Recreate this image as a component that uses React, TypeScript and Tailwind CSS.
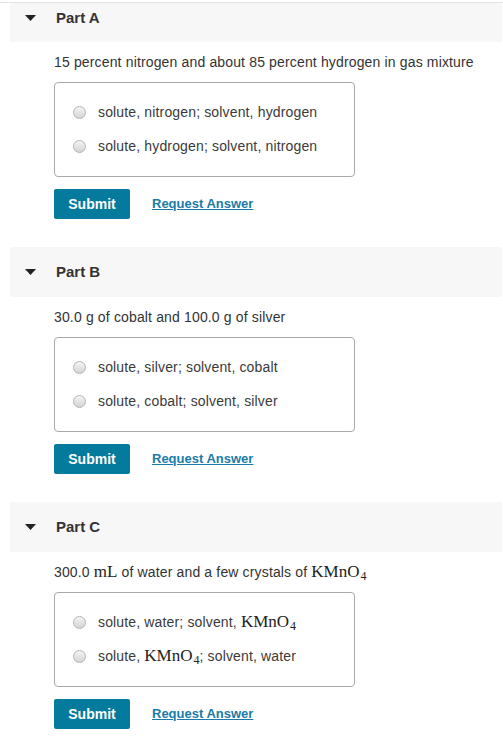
import React from "react";

const serif = { fontFamily: '"Liberation Serif", "DejaVu Serif", serif' } as const;

function KMnO4() {
  return (
    <span className="text-[17px] leading-none text-[#222] tracking-normal" style={serif}>
      KMnO<sub className="text-[12px] ml-[1px]">4</sub>
    </span>
  );
}

function Radio() {
  return (
    <span className="inline-block w-[13px] h-[13px] rounded-full border border-[#b4b4b4] bg-gradient-to-b from-[#f4f4f4] to-[#d4d4d4] shrink-0" />
  );
}

function Triangle() {
  return (
    <svg width="11" height="6" viewBox="0 0 11 6" className="shrink-0">
      <polygon points="0,0 11,0 5.5,6" fill="#222" />
    </svg>
  );
}

function Section({
  title,
  question,
  options,
  first,
}: {
  title: string;
  question: React.ReactNode;
  options: React.ReactNode[];
  first?: boolean;
}) {
  return (
    <div className={first ? "" : "mt-[28px]"}>
      <div
        className={
          "bg-[#f7f7f7] flex items-center pl-[15px] " +
          (first ? "h-[39px] pb-[9px]" : "h-[50px]")
        }
      >
        <Triangle />
        <span className="ml-[20px] text-[15px] font-bold text-[#333]">{title}</span>
      </div>
      <div className="pl-[44px]">
        <div className="mt-[10px] h-[20px] flex items-center text-[14px] tracking-[0.15px] text-[#333] whitespace-nowrap">
          {question}
        </div>
        <div className="mt-[10px] w-[301px] h-[95px] border border-[#a9a9a9] rounded-[4px] pt-[12px]">
          {options.map((o, i) => (
            <div key={i} className="h-[34px] flex items-center pl-[18px]">
              <Radio />
              <span className="ml-[12px] text-[14px] tracking-[0.15px] text-[#3a3a3a] whitespace-nowrap">{o}</span>
            </div>
          ))}
        </div>
        <div className="mt-[12px] flex items-center">
          <button className="h-[30px] w-[76px] bg-[#047b9c] rounded-[2px] text-white text-[14px] font-bold">
            Submit
          </button>
          <span className="ml-[22px] text-[13px] font-bold text-[#1b7ba8] underline">
            Request Answer
          </span>
        </div>
      </div>
    </div>
  );
}

export default function App() {
  return (
    <div
      className="w-[503px] h-[742px] bg-white overflow-hidden pt-[2px]"
      style={{ fontFamily: '"Liberation Sans", Arial, sans-serif' }}
    >
      <div className="border-t border-[#e2e2e2] pl-[10px] pr-[1px]">
        <Section
          first
          title="Part A"
          question="15 percent nitrogen and about 85 percent hydrogen in gas mixture"
          options={[
            "solute, nitrogen; solvent, hydrogen",
            "solute, hydrogen; solvent, nitrogen",
          ]}
        />
        <Section
          title="Part B"
          question="30.0 g of cobalt and 100.0 g of silver"
          options={["solute, silver; solvent, cobalt", "solute, cobalt; solvent, silver"]}
        />
        <Section
          title="Part C"
          question={
            <span>
              300.0 <span className="text-[17px] text-[#222] tracking-normal" style={serif}>mL</span> of water and a few crystals of{" "}
              <KMnO4 />
            </span>
          }
          options={[
            <span key="a">
              solute, water; solvent, <KMnO4 />
            </span>,
            <span key="b">
              solute, <KMnO4 />; solvent, water
            </span>,
          ]}
        />
      </div>
    </div>
  );
}
